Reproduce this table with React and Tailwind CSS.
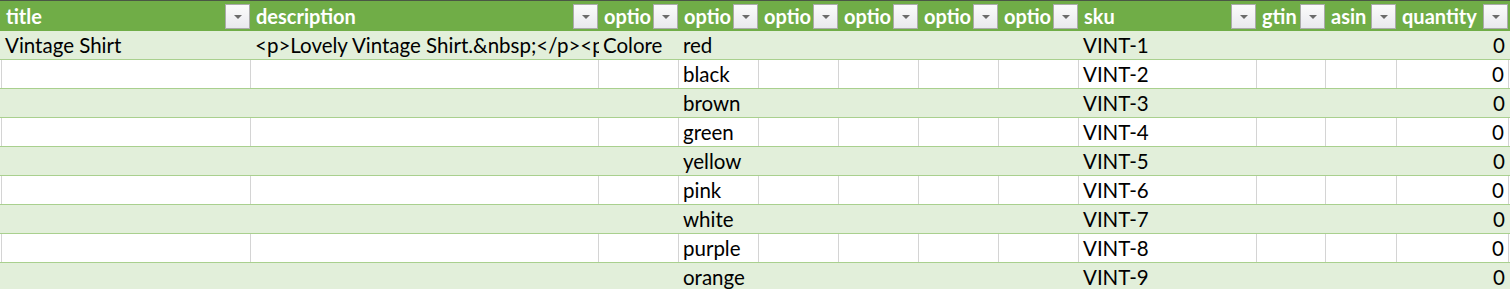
import React from 'react';

const cols = [
  'title', 'description', 'option1', 'option2', 'option3', 'option4', 'option5', 'option6',
  'sku', 'gtin', 'asin', 'quantity',
];

const headerLabels = ['title', 'description', 'optio', 'optio', 'optio', 'optio', 'optio', 'optio', 'sku', 'gtin', 'asin', 'quantity'];

const colors = ['red', 'black', 'brown', 'green', 'yellow', 'pink', 'white', 'purple', 'orange'];

const rows = colors.map((c, i) => ({
  title: i === 0 ? 'Vintage Shirt' : '',
  description: i === 0 ? '<p>Lovely Vintage Shirt.&nbsp;</p><p>Made of cotton.</p>' : '',
  option1: i === 0 ? 'Colore' : '',
  option2: c,
  option3: '',
  option4: '',
  option5: '',
  option6: '',
  sku: `VINT-${i + 1}`,
  gtin: '',
  asin: '',
  quantity: '0',
}));

const gridCols =
  'grid grid-cols-[250px_348px_80px_80px_80px_80px_80px_80px_178px_69px_71px_112px]';

const FilterButton = () => (
  <div className="absolute right-[1px] top-[3px] flex h-[25px] w-[25px] items-center justify-center border border-[#ababab] bg-gradient-to-b from-[#fbfbfb] to-[#e9e9ee]">
    <svg width="10" height="6" viewBox="0 0 10 6">
      <path d="M1 1 L9 1 L5 5 Z" fill="#6b6b6b" />
    </svg>
  </div>
);

export default function App() {
  return (
    <div className="w-[1510px] h-[289px] overflow-hidden bg-white" style={{ fontFamily: 'Lato, "Noto Sans", sans-serif' }}>
      {/* Header */}
      <div className="h-[1px] bg-[#4a5744]" />
      <div className={`${gridCols} h-[30px] bg-[#70ad47] pl-[1px]`}>
        {headerLabels.map((label, i) => (
          <div key={i} className="relative h-[30px] overflow-hidden">
            <span className="block whitespace-nowrap pl-[5px] text-[20px] font-bold leading-[30px] text-white">
              {label}
            </span>
            <FilterButton />
          </div>
        ))}
      </div>

      {/* Body */}
      {rows.map((row, r) => {
        const banded = r % 2 === 0;
        return (
          <div
            key={r}
            className={`${gridCols} h-[29px] border-b border-[#a9d08e] pl-[1px] ${banded ? 'bg-[#e2efda]' : 'bg-white'}`}
          >
            {cols.map((col, c) => (
              <div
                key={col}
                className={`h-[28px] overflow-hidden whitespace-nowrap px-[4px] text-[20.5px] leading-[28px] text-black ${
                  banded ? '' : 'border-r border-[#d4d4d4]'
                } ${!banded && c === 0 ? 'border-l' : ''} ${col === 'quantity' ? 'text-right' : ''}`}
              >
                {row[col]}
              </div>
            ))}
          </div>
        );
      })}
    </div>
  );
}
